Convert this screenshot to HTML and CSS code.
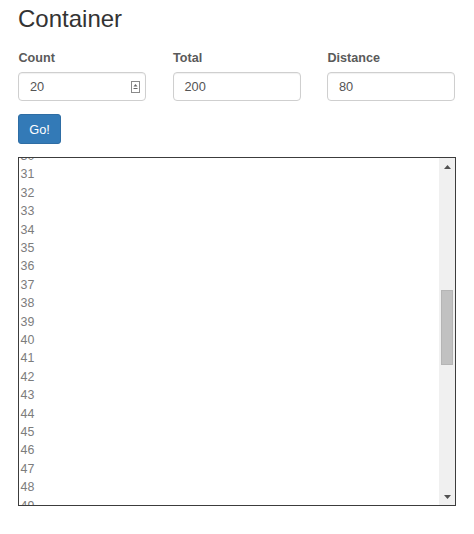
FILE: index.html
```html
<!DOCTYPE html>
<html>
<head>
<meta charset="utf-8">
<link rel="stylesheet" href="styles.css">
</head>
<body>
<div class="page">
  <h3 class="title">Container</h3>
  <div class="fields">
    <div class="field">
      <label class="label">Count</label>
      <div class="input">
        <span>20</span>
        <svg class="spin" width="9" height="12" viewBox="0 0 9 12">
          <rect x="0.5" y="0.5" width="8" height="11" fill="none" stroke="#8a8a8a"/>
          <path d="M2.5 5.5 L4.5 3 L6.5 5.5 Z" fill="#666"/>
          <path d="M2.5 7.5 L6.5 7.5" stroke="#666" stroke-width="1"/>
        </svg>
      </div>
    </div>
    <div class="field">
      <label class="label">Total</label>
      <div class="input"><span>200</span></div>
    </div>
    <div class="field">
      <label class="label">Distance</label>
      <div class="input"><span>80</span></div>
    </div>
  </div>
  <button class="btn">Go!</button>
  <div class="listbox">
    <div class="list">
      <div class="items">
        <div class="item">30</div><div class="item">31</div><div class="item">32</div><div class="item">33</div><div class="item">34</div><div class="item">35</div><div class="item">36</div><div class="item">37</div><div class="item">38</div><div class="item">39</div><div class="item">40</div><div class="item">41</div><div class="item">42</div><div class="item">43</div><div class="item">44</div><div class="item">45</div><div class="item">46</div><div class="item">47</div><div class="item">48</div><div class="item">49</div>
      </div>
    </div>
    <div class="scrollbar">
      <div class="arrow">
        <svg width="7" height="4" viewBox="0 0 7 4"><path d="M0 4 L3.5 0 L7 4 Z" fill="#505050"/></svg>
      </div>
      <div class="thumb"></div>
      <div class="spacer"></div>
      <div class="arrow">
        <svg width="7" height="4" viewBox="0 0 7 4"><path d="M0 0 L7 0 L3.5 4 Z" fill="#505050"/></svg>
      </div>
    </div>
  </div>
</div>
</body>
</html>
```

FILE: styles.css
```css
html, body {
  margin: 0;
  padding: 0;
  background: #fff;
}
body {
  font-family: "Liberation Sans", Arial, sans-serif;
  color: #333;
}
.page {
  padding: 4.7px 0 0 18px;
  width: 438px;
}
.title {
  margin: 0;
  font-size: 24px;
  line-height: 28px;
  font-weight: normal;
  color: #333;
}
.fields {
  display: grid;
  grid-template-columns: 128px 128px 128px;
  column-gap: 26.5px;
  margin-top: 16.6px;
}
.field {
  display: flex;
  flex-direction: column;
}
.label {
  font-size: 12.6px;
  line-height: 18px;
  font-weight: bold;
  color: #5a5a5a;
  margin-left: 0.5px;
}
.input {
  margin-top: 4.7px;
  height: 29px;
  box-sizing: border-box;
  border: 1px solid #cfcfcf;
  border-radius: 4px;
  box-shadow: inset 0 1px 1px rgba(0,0,0,0.06);
  display: flex;
  align-items: center;
  justify-content: space-between;
  padding: 0 5px 0 11px;
  font-size: 12.8px;
  color: #555;
}
.spin {
  display: block;
  margin-top: 1px;
}
.btn {
  display: block;
  margin-top: 13.5px;
  height: 30px;
  width: 43px;
  padding: 0;
  box-sizing: border-box;
  background: #337ab7;
  border: 1px solid #2e6da4;
  border-radius: 3px;
  color: #fff;
  font-family: "Liberation Sans", Arial, sans-serif;
  font-size: 12.8px;
}
.listbox {
  margin-top: 13px;
  display: flex;
  height: 349px;
  box-sizing: border-box;
  border: 1px solid #3c3c3c;
}
.list {
  flex: 1;
  overflow: hidden;
}
.items {
  margin-top: -11.6px;
  padding-left: 1.5px;
}
.item {
  font-size: 12.4px;
  line-height: 18.4px;
  color: #7c7c7c;
}
.scrollbar {
  width: 16px;
  background: #f0f0f0;
  display: flex;
  flex-direction: column;
  align-items: center;
}
.arrow {
  height: 17px;
  width: 16px;
  display: flex;
  align-items: center;
  justify-content: center;
}
.arrow svg {
  display: block;
}
.thumb {
  margin-top: 115px;
  width: 12px;
  height: 75px;
  box-sizing: border-box;
  background: #c1c1c1;
  border: 1px solid #b5b5b5;
}
.spacer {
  flex: 1;
}
```
